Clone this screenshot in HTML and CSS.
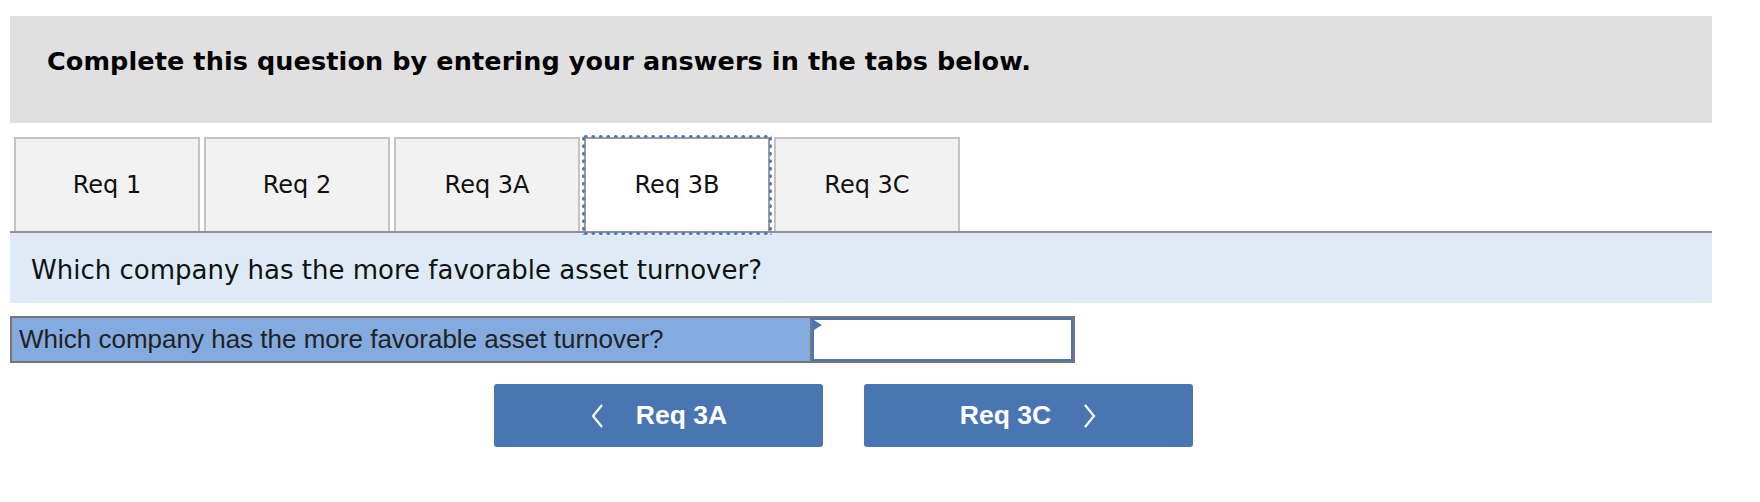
FILE: index.html
```html
<!DOCTYPE html>
<html>
<head>
<meta charset="utf-8">
<link rel="stylesheet" href="styles.css">
</head>
<body>
<div class="page">
  <div class="header">Complete this question by entering your answers in the tabs below.</div>
  <div class="tabs">
    <div class="tab">Req 1</div>
    <div class="tab">Req 2</div>
    <div class="tab">Req 3A</div>
    <div class="tab tab-active">Req 3B</div>
    <div class="tab">Req 3C</div>
  </div>
  <div class="band">Which company has the more favorable asset turnover?</div>
  <div class="answer-row">
    <div class="answer-label">Which company has the more favorable asset turnover?</div>
    <div class="answer-input"><span class="flag"></span></div>
  </div>
  <div class="nav">
    <div class="nav-btn">
      <svg class="chev" width="14" height="26" viewBox="0 0 14 26"><polyline points="12,2 3,13 12,24" fill="none" stroke="#fff" stroke-width="2.2"/></svg>
      <span>Req 3A</span>
    </div>
    <div class="nav-btn">
      <span>Req 3C</span>
      <svg class="chev" width="14" height="26" viewBox="0 0 14 26"><polyline points="2,2 11,13 2,24" fill="none" stroke="#fff" stroke-width="2.2"/></svg>
    </div>
  </div>
</div>
</body>
</html>
```

FILE: styles.css
```css
html, body {
  margin: 0;
  padding: 0;
  background: #fff;
}

.page {
  padding: 16px 0 0 10px;
  width: 1702px;
  font-family: Verdana, "DejaVu Sans", sans-serif;
  color: #000;
}

.header {
  box-sizing: border-box;
  height: 107px;
  background: #e0e0e0;
  padding: 29px 0 0 37px;
  font-weight: bold;
  font-size: 25.5px;
  letter-spacing: 0.1px;
  line-height: 32px;
}

.tabs {
  display: flex;
  gap: 4px;
  margin-top: 14px;
  padding-left: 4px;
  border-bottom: 2px solid #929292;
}

.tab {
  box-sizing: border-box;
  width: 186px;
  height: 94px;
  background: #f2f2f2;
  border: 2px solid #c4c4c4;
  border-bottom: none;
  display: flex;
  align-items: center;
  justify-content: center;
  font-size: 24px;
  color: #111;
}

.tab-active {
  position: relative;
  background: #fff;
  border-color: #9c9c9c;
}

.tab-active::after {
  content: "";
  position: absolute;
  top: -4px;
  left: -4px;
  right: -4px;
  bottom: -4px;
  pointer-events: none;
  background:
    radial-gradient(circle, #4a77c4 1.4px, transparent 1.9px) left top / 7.5px 3px repeat-x,
    radial-gradient(circle, #4a77c4 1.4px, transparent 1.9px) left bottom / 7.5px 3px repeat-x,
    radial-gradient(circle, #4a77c4 1.4px, transparent 1.9px) left top / 3px 7.5px repeat-y,
    radial-gradient(circle, #4a77c4 1.4px, transparent 1.9px) right top / 3px 7.5px repeat-y;
}

.band {
  box-sizing: border-box;
  height: 70px;
  background: #deebf7;
  padding: 21px 0 0 21px;
  font-size: 26px;
  line-height: 32px;
  color: #111;
}

.answer-row {
  display: flex;
  box-sizing: border-box;
  width: 1065px;
  height: 47px;
  margin-top: 13px;
  border: 2px solid #767676;
}

.answer-label {
  box-sizing: border-box;
  width: 800px;
  background: #84abdf;
  border-right: 2px solid #767676;
  padding-left: 7px;
  font-family: Arial, "Liberation Sans", sans-serif;
  font-size: 26px;
  line-height: 43px;
  color: #222;
  white-space: nowrap;
}

.answer-input {
  position: relative;
  flex: 1;
  background: #fff;
  border: 2px solid #4a75b8;
}

.flag {
  position: absolute;
  left: 0;
  top: 0;
  width: 0;
  height: 0;
  border-top: 5px solid transparent;
  border-bottom: 5px solid transparent;
  border-left: 8px solid #4a75b8;
}

.nav {
  display: flex;
  gap: 41px;
  margin-top: 21px;
  padding-left: 484px;
}

.nav-btn {
  box-sizing: border-box;
  width: 329px;
  height: 63px;
  background: #4a75b3;
  border-radius: 3px;
  display: flex;
  align-items: center;
  justify-content: center;
  gap: 32px;
  color: #fff;
  font-family: Arial, "Liberation Sans", sans-serif;
  font-weight: bold;
  font-size: 26.5px;
}

.chev {
  display: block;
}
```
